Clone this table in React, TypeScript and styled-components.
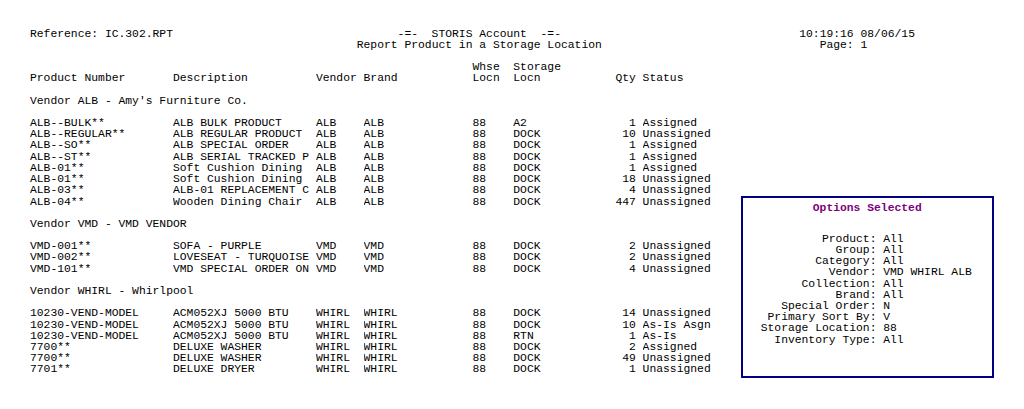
import React from "react";
import styled, { createGlobalStyle } from "styled-components";

const Global = createGlobalStyle`
  html, body { margin: 0; padding: 0; background: #ffffff; }
  body { font-family: "Liberation Mono", "DejaVu Sans Mono", monospace; }
`;

const LH = 11.2;

const Page = styled.div`
  padding: 28.5px 0 0 30px;
  font-family: "Liberation Mono", "DejaVu Sans Mono", monospace;
  font-size: 11.35px;
  line-height: ${LH}px;
  color: #000;
  white-space: pre;
  width: 994px;
`;

const ReportHeader = styled.header`
  display: grid;
  grid-template-columns: 48ch 36ch 29ch auto;
  margin-bottom: ${LH}px;
`;

const TitleBlock = styled.div`
  display: flex;
  flex-direction: column;
  align-items: center;
`;

const Stamp = styled.div`
  display: flex;
  flex-direction: column;
`;

const PageNo = styled.span`
  padding-left: 3ch;
`;

const Main = styled.div`
  display: flex;
  align-items: flex-start;
  gap: 30px;
`;

const Table = styled.div`
  width: 100ch;
  display: flex;
  flex-direction: column;
`;

const Row = styled.div`
  display: grid;
  grid-template-columns: 21ch 21ch 7ch 16ch 6ch 13ch 5ch 1ch auto;
  align-items: end;
`;

const Cell = styled.span<{ $right?: boolean }>`
  text-align: ${(p) => (p.$right ? "right" : "left")};
  overflow: hidden;
`;

const Group = styled.section`
  margin-top: ${LH}px;
`;

const GroupTitle = styled.div`
  margin-bottom: ${LH}px;
`;

const OptionsBox = styled.aside`
  box-sizing: border-box;
  width: 253px;
  height: 182px;
  margin-top: 133.5px;
  border: 2px solid #000080;
  padding: 5px 0 0 18px;
`;

const OptionsTitle = styled.div`
  color: #800080;
  font-weight: bold;
  text-align: center;
  padding-right: 18px;
  margin-bottom: 20px;
`;

const OptionsGrid = styled.div`
  display: grid;
  grid-template-columns: 17ch auto;
  column-gap: 1ch;
`;

const OptLabel = styled.span`
  text-align: right;
`;

const groups: { title: string; rows: string[][] }[] = [
  {
    title: "Vendor ALB - Amy's Furniture Co.",
    rows: [
      ["ALB--BULK**", "ALB BULK PRODUCT", "ALB", "ALB", "88", "A2", "1", "Assigned"],
      ["ALB--REGULAR**", "ALB REGULAR PRODUCT", "ALB", "ALB", "88", "DOCK", "10", "Unassigned"],
      ["ALB--SO**", "ALB SPECIAL ORDER", "ALB", "ALB", "88", "DOCK", "1", "Assigned"],
      ["ALB--ST**", "ALB SERIAL TRACKED P", "ALB", "ALB", "88", "DOCK", "1", "Assigned"],
      ["ALB-01**", "Soft Cushion Dining", "ALB", "ALB", "88", "DOCK", "1", "Assigned"],
      ["ALB-01**", "Soft Cushion Dining", "ALB", "ALB", "88", "DOCK", "18", "Unassigned"],
      ["ALB-03**", "ALB-01 REPLACEMENT C", "ALB", "ALB", "88", "DOCK", "4", "Unassigned"],
      ["ALB-04**", "Wooden Dining Chair", "ALB", "ALB", "88", "DOCK", "447", "Unassigned"],
    ],
  },
  {
    title: "Vendor VMD - VMD VENDOR",
    rows: [
      ["VMD-001**", "SOFA - PURPLE", "VMD", "VMD", "88", "DOCK", "2", "Unassigned"],
      ["VMD-002**", "LOVESEAT - TURQUOISE", "VMD", "VMD", "88", "DOCK", "2", "Unassigned"],
      ["VMD-101**", "VMD SPECIAL ORDER ON", "VMD", "VMD", "88", "DOCK", "4", "Unassigned"],
    ],
  },
  {
    title: "Vendor WHIRL - Whirlpool",
    rows: [
      ["10230-VEND-MODEL", "ACM052XJ 5000 BTU", "WHIRL", "WHIRL", "88", "DOCK", "14", "Unassigned"],
      ["10230-VEND-MODEL", "ACM052XJ 5000 BTU", "WHIRL", "WHIRL", "88", "DOCK", "10", "As-Is Asgn"],
      ["10230-VEND-MODEL", "ACM052XJ 5000 BTU", "WHIRL", "WHIRL", "88", "RTN", "1", "As-Is"],
      ["7700**", "DELUXE WASHER", "WHIRL", "WHIRL", "88", "DOCK", "2", "Assigned"],
      ["7700**", "DELUXE WASHER", "WHIRL", "WHIRL", "88", "DOCK", "49", "Unassigned"],
      ["7701**", "DELUXE DRYER", "WHIRL", "WHIRL", "88", "DOCK", "1", "Unassigned"],
    ],
  },
];

const options: [string, string][] = [
  ["Product:", "All"],
  ["Group:", "All"],
  ["Category:", "All"],
  ["Vendor:", "VMD WHIRL ALB"],
  ["Collection:", "All"],
  ["Brand:", "All"],
  ["Special Order:", "N"],
  ["Primary Sort By:", "V"],
  ["Storage Location:", "88"],
  ["Inventory Type:", "All"],
];

function DataRow({ r }: { r: string[] }) {
  return (
    <Row>
      <Cell>{r[0]}</Cell>
      <Cell>{r[1]}</Cell>
      <Cell>{r[2]}</Cell>
      <Cell>{r[3]}</Cell>
      <Cell>{r[4]}</Cell>
      <Cell>{r[5]}</Cell>
      <Cell $right>{r[6]}</Cell>
      <Cell />
      <Cell>{r[7]}</Cell>
    </Row>
  );
}

export default function App() {
  return (
    <>
      <Global />
      <Page>
        <ReportHeader>
          <span>Reference: IC.302.RPT</span>
          <TitleBlock>
            <span>-=-  STORIS Account  -=-</span>
            <span>Report Product in a Storage Location</span>
          </TitleBlock>
          <span />
          <Stamp>
            <span>10:19:16 08/06/15</span>
            <PageNo>Page: 1</PageNo>
          </Stamp>
        </ReportHeader>
        <Main>
          <Table>
            <Row>
              <Cell>Product Number</Cell>
              <Cell>Description</Cell>
              <Cell>Vendor</Cell>
              <Cell>Brand</Cell>
              <Cell>{"Whse\nLocn"}</Cell>
              <Cell>{"Storage\nLocn"}</Cell>
              <Cell $right>Qty</Cell>
              <Cell />
              <Cell>Status</Cell>
            </Row>
            {groups.map((g) => (
              <Group key={g.title}>
                <GroupTitle>{g.title}</GroupTitle>
                {g.rows.map((r, i) => (
                  <DataRow key={i} r={r} />
                ))}
              </Group>
            ))}
          </Table>
          <OptionsBox>
            <OptionsTitle>Options Selected</OptionsTitle>
            <OptionsGrid>
              {options.map(([k, v]) => (
                <React.Fragment key={k}>
                  <OptLabel>{k}</OptLabel>
                  <span>{v}</span>
                </React.Fragment>
              ))}
            </OptionsGrid>
          </OptionsBox>
        </Main>
      </Page>
    </>
  );
}
